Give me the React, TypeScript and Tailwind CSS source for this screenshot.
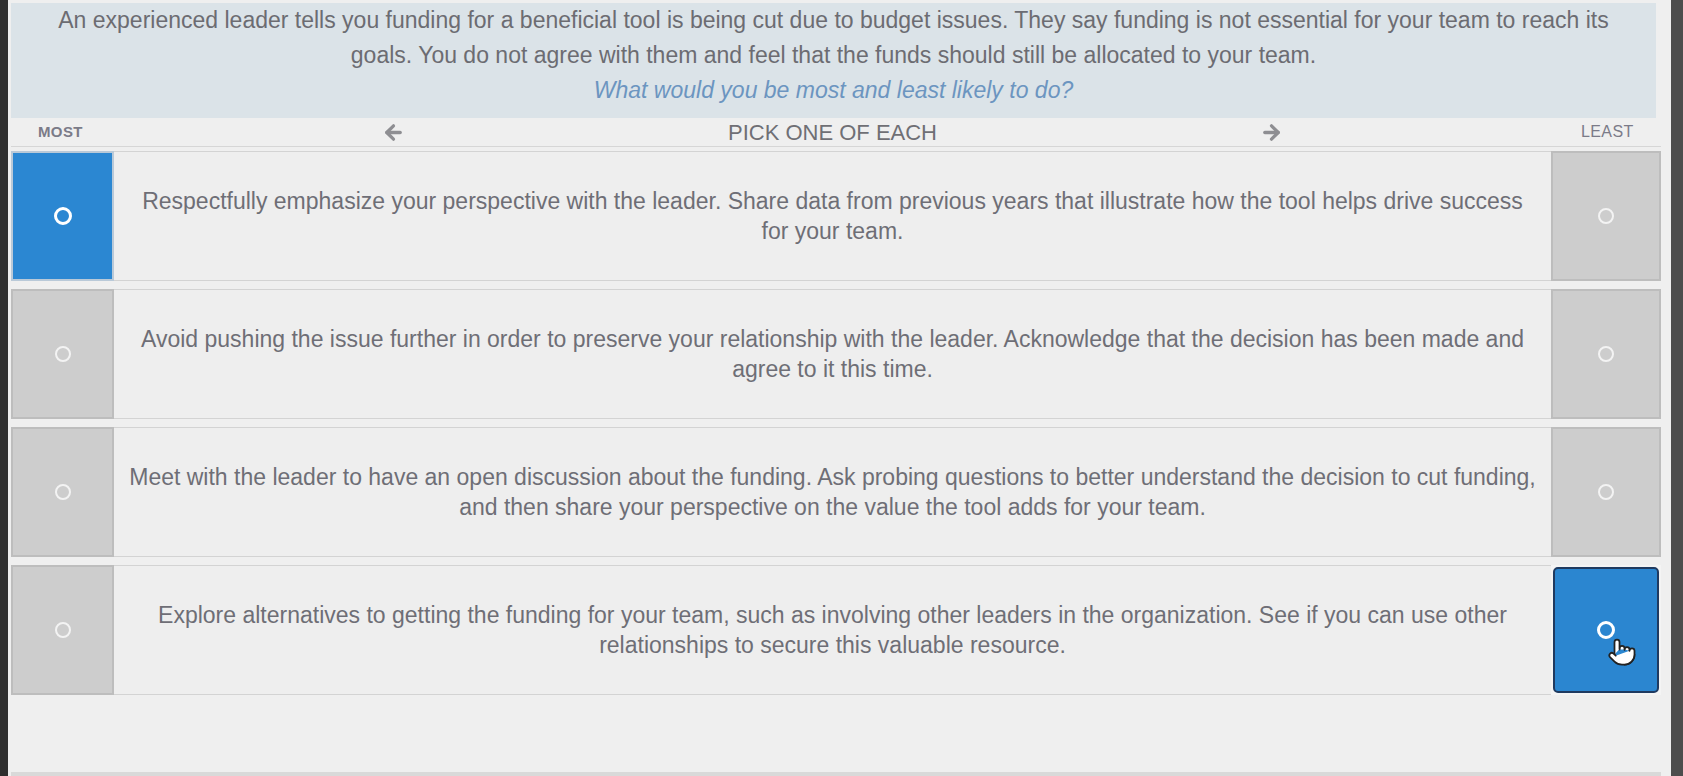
import { ArrowLeft, ArrowRight, Pointer } from 'lucide-react';

const options = [
  {
    lines: [
      'Respectfully emphasize your perspective with the leader. Share data from previous years that illustrate how the tool helps drive success',
      'for your team.',
    ],
    most: true,
    least: false,
  },
  {
    lines: [
      'Avoid pushing the issue further in order to preserve your relationship with the leader. Acknowledge that the decision has been made and',
      'agree to it this time.',
    ],
    most: false,
    least: false,
  },
  {
    lines: [
      'Meet with the leader to have an open discussion about the funding. Ask probing questions to better understand the decision to cut funding,',
      'and then share your perspective on the value the tool adds for your team.',
    ],
    most: false,
    least: false,
  },
  {
    lines: [
      'Explore alternatives to getting the funding for your team, such as involving other leaders in the organization. See if you can use other',
      'relationships to secure this valuable resource.',
    ],
    most: false,
    least: true,
  },
];

function Radio({ selected }: { selected: boolean }) {
  return (
    <span
      className={
        selected
          ? 'block w-[18px] h-[18px] rounded-full border-[3px] border-white'
          : 'block w-[16px] h-[16px] rounded-full border-2 border-[#f3f3f3]'
      }
    />
  );
}

function ChoiceBox({ selected, focused, wide }: { selected: boolean; focused?: boolean; wide?: boolean }) {
  const w = wide ? 'w-[110px]' : 'w-[103px]';
  if (focused) {
    return (
      <div className={`${w} shrink-0 p-[2px] bg-[#f4f4f4]`}>
        <div className="relative h-full flex items-center justify-center rounded-[5px] bg-[#2b86d0] border-2 border-[#1f3a60]">
          <Radio selected />
          <Pointer
            className="absolute left-[52px] top-[68px]"
            size={30}
            fill="#ffffff"
            stroke="#222222"
            strokeWidth={1.4}
          />
        </div>
      </div>
    );
  }
  return (
    <div
      className={`${w} shrink-0 flex items-center justify-center border-2 ${
        selected ? 'bg-[#2b87d2] border-[#b9c9d8]' : 'bg-[#cdcdcd] border-[#bdbdbd]'
      }`}
    >
      <Radio selected={selected} />
    </div>
  );
}

export default function App() {
  return (
    <div
      className="flex h-[776px] w-full overflow-hidden bg-[#ececec]"
      style={{ fontFamily: '"Liberation Sans", Arial, sans-serif' }}
    >
      <div className="w-[8px] shrink-0 bg-[#2f2f2f]" />

      <div className="flex-1 flex flex-col pl-[3px] pr-[10px] bg-[#efefef]">
        <div className="mt-[3px] mr-[5px] bg-[#dbe3e8] pb-[10px] text-center text-[23px] leading-[35px] text-[#6c6c72]">
          <p>
            An experienced leader tells you funding for a beneficial tool is being cut due to budget issues. They say funding is not essential for your team to reach its
            <br />
            goals. You do not agree with them and feel that the funds should still be allocated to your team.
          </p>
          <p className="italic text-[#6c95c0]">What would you be most and least likely to do?</p>
        </div>

        <div className="flex items-center h-[29px] border-b border-[#d6d6d6]">
          <div className="w-[103px] shrink-0 pl-[27px] text-[15px] font-bold tracking-wide text-[#7b7b88]">MOST</div>
          <div className="flex-1 flex items-center justify-between px-[268px] text-[#6f6f75]">
            <ArrowLeft size={23} strokeWidth={3.4} className="text-[#8e8e92]" />
            <span className="text-[22px]">PICK ONE OF EACH</span>
            <ArrowRight size={23} strokeWidth={3.4} className="text-[#8e8e92]" />
          </div>
          <div className="w-[110px] shrink-0 pl-[30px] text-[16px] tracking-wide text-[#7b7b88]">LEAST</div>
        </div>

        <div className="flex flex-col gap-[8px] pt-[4px]">
          {options.map((o, i) => (
            <div key={i} className="flex h-[130px]">
              <ChoiceBox selected={o.most} />
              <div className="flex-1 flex items-center justify-center bg-[#eeeeee] border-y border-[#d3d3d3] text-center text-[23px] leading-[30px] text-[#6e6e76]">
                <p>
                  {o.lines[0]}
                  <br />
                  {o.lines[1]}
                </p>
              </div>
              <ChoiceBox selected={o.least} focused={o.least} wide />
            </div>
          ))}
        </div>

        <div className="flex-1" />
        <div className="h-[4px] bg-[#d9d9d9]" />
      </div>

      <div className="w-[12px] shrink-0 bg-[#4d4d4d]" />
    </div>
  );
}
